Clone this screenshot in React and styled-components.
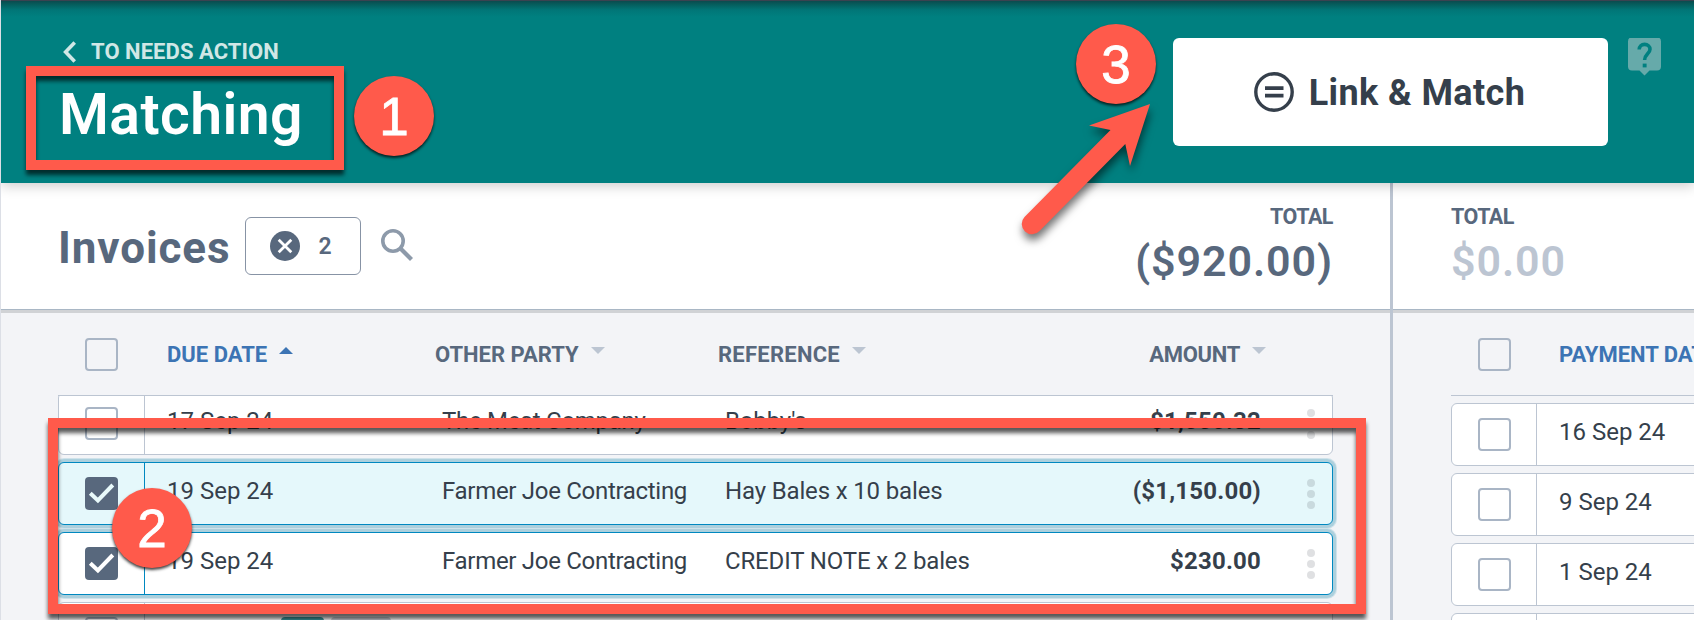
import React from 'react';
import styled, { createGlobalStyle, css } from 'styled-components';

const color = {
  teal: '#008080',
  slate: '#58687d',
  ink: '#353f4b',
  line: '#bcc5d2',
  blue: '#3c74b4',
  accent: '#0088c0',
  mark: '#ff5a4b',
};

const GlobalStyle = createGlobalStyle`
  * { box-sizing: border-box; }
  body { margin: 0; overflow: hidden; font-family: Roboto, "Liberation Sans", sans-serif; color: ${color.ink}; }
`;

const Page = styled.div`
  position: relative;
  width: 1694px;
  height: 620px;
  overflow: hidden;
  display: flex;
  flex-direction: column;
  border-left: 1px solid #dcdfe6;
  background: #f3f4f7;
`;

const Header = styled.header`
  flex: none;
  height: 183px;
  display: flex;
  justify-content: space-between;
  background: linear-gradient(#3b4350 0 1px, #0b4b4e 1px, #05605f 5px, #017677 10px, ${color.teal} 17px);
  padding: 0 33px 0 62px;
  z-index: 1;
  box-shadow: 0 3px 12px rgba(0, 0, 0, 0.2);
`;

const Heading = styled.div`
  padding-top: 41px;
`;

const BackLink = styled.a`
  display: flex;
  align-items: center;
  gap: 15px;
  height: 22px;
  color: #d0e7e6;
  font-size: 22px;
  font-weight: 700;
  line-height: 22px;
  letter-spacing: 0.05px;
`;

const Title = styled.h1`
  margin: 22px 0 0 -4px;
  color: #fff;
  font-size: 57px;
  font-weight: 600;
  line-height: 60px;
  letter-spacing: 0.45px;
`;

const Actions = styled.div`
  display: flex;
  align-items: flex-start;
  gap: 20px;
  padding-top: 38px;
`;

const PrimaryButton = styled.button`
  width: 435px;
  height: 108px;
  display: flex;
  align-items: center;
  justify-content: center;
  gap: 15px;
  padding: 0 2px 0 0;
  border: 0;
  border-radius: 6px;
  background: #fff;
  color: ${color.ink};
  font: 700 36px/40px Roboto, sans-serif;
  letter-spacing: 0.4px;
`;

const ButtonLabel = styled.span`
  padding-top: 2px;
`;

const Panes = styled.main`
  flex: 1;
  min-height: 0;
  display: flex;
`;

const Pane = styled.section`
  flex: none;
  width: ${(p) => p.$width}px;
  display: flex;
  flex-direction: column;
  overflow: hidden;
  ${(p) => p.$divided && css`border-right: 3px solid ${color.line};`}
`;

const Toolbar = styled.div`
  flex: none;
  height: 127px;
  display: flex;
  align-items: flex-start;
  padding: 0 57px 0 ${(p) => (p.$short ? 58 : 57)}px;
  background: #fff;
  border-bottom: 1px solid #a9b7c5;
  box-shadow: 0 3px 0 #d0d2d5;
`;

const ListTitle = styled.h2`
  margin: 40px 15px 0 0;
  color: ${color.slate};
  font-size: 44px;
  font-weight: 700;
  line-height: 50px;
  letter-spacing: 0.9px;
`;

const FilterChip = styled.div`
  width: 116px;
  height: 58px;
  margin: 34px 20px 0 0;
  display: flex;
  align-items: center;
  gap: 18px;
  padding-left: 24px;
  border: 1px solid #8793a5;
  border-radius: 6px;
  color: ${color.slate};
  font-size: 23px;
  font-weight: 600;
`;

const SearchButton = styled.div`
  margin-top: 46px;
  height: 33px;
`;

const Total = styled.div`
  margin-left: ${(p) => (p.$end ? 'auto' : '0')};
  padding-top: 22px;
  text-align: ${(p) => (p.$end ? 'right' : 'left')};
`;

const TotalLabel = styled.div`
  color: ${color.slate};
  font-size: 21.5px;
  font-weight: 700;
  line-height: 24px;
  letter-spacing: -0.5px;
`;

const TotalValue = styled.div`
  margin-top: 8px;
  color: ${(p) => (p.$muted ? color.line : color.slate)};
  font-size: 43px;
  font-weight: 600;
  line-height: 48px;
  letter-spacing: 0.9px;
`;

const columns = css`
  display: grid;
  grid-template-columns: ${(p) => (p.$short ? '86px 1fr' : '87px 297px 283px 275px 261px 1fr')};
`;

const TableHead = styled.div`
  flex: none;
  height: 86px;
  margin: 0 ${(p) => (p.$short ? '0 0 58px' : '57px')};
  padding-top: 3px;
  border-bottom: 1px solid ${color.line};
  ${columns}
  align-items: center;
`;

const HeadCell = styled.div`
  display: flex;
  align-items: center;
  gap: 12px;
  padding-left: ${(p) => (p.$first ? 22 : 0)}px;
  margin-left: ${(p) => (p.$outdent ? -7 : 0)}px;
  justify-content: ${(p) => (p.$end ? 'flex-end' : 'flex-start')};
  margin-right: ${(p) => (p.$end ? -5 : 0)}px;
  color: ${(p) => (p.$active ? color.blue : color.slate)};
  font-size: 22px;
  font-weight: 700;
  letter-spacing: ${(p) => p.$track || 0}px;
  white-space: nowrap;
`;

const SortMark = styled.i`
  margin-bottom: 8px;
  border: 7px solid transparent;
  ${(p) =>
    p.$up
      ? css`border-bottom-color: ${color.blue}; border-top: 0;`
      : css`border-top-color: ${color.line}; border-bottom: 0;`}
`;

const CheckCell = styled.div`
  height: 100%;
  display: flex;
  align-items: center;
  padding-left: ${(p) => (p.$inRow ? 26 : 27)}px;
  margin-right: ${(p) => (p.$inRow ? 1 : 0)}px;
  border-right: ${(p) => (p.$inRow ? '1px solid' : '0')};
  border-color: inherit;
`;

const Box = styled.span`
  flex: none;
  width: 33px;
  height: 33px;
  border-radius: 4px;
  border: 2px solid #a9b5c5;
  ${(p) => p.$checked && css`border: 0; background: ${color.slate};`}
  svg { display: block; }
`;

const List = styled.div`
  flex: 1;
  min-height: 0;
  margin: ${(p) => (p.$short ? '0 0 0 58px' : '0 52px')};
  padding: ${(p) => (p.$short ? '7px 0 0' : '0 5px')};
  display: flex;
  flex-direction: column;
  gap: 7px;
  overflow: hidden;
`;

const ListRow = styled.div`
  flex: none;
  height: 63px;
  ${columns}
  align-items: center;
  border: 1px solid ${color.line};
  border-radius: 6px;
  background: #fff;
  font-size: 24px;
  ${(p) => p.$short && css`width: 400px;`}
  ${(p) => p.$clipped && css`margin-top: -4px;`}
  ${(p) =>
    p.$selected &&
    css`
      border-color: ${color.accent};
      box-shadow: 0 0 0 3px #acd0dd, 0 0 0 4px #cfe2ea;
    `}
  ${(p) => p.$tinted && css`background: #e5f8fb;`}
`;

const Cell = styled.div`
  padding: 0 0 5px ${(p) => (p.$first ? 21 : 0)}px;
  margin-left: ${(p) => (p.$first ? 0 : -1)}px;
  line-height: 30px;
  white-space: nowrap;
  letter-spacing: ${(p) => p.$track || 0}px;
`;

const Amount = styled(Cell)`
  padding-right: 1px;
  font-weight: 700;
  text-align: right;
`;

const Dots = styled.div`
  display: flex;
  flex-direction: column;
  align-items: center;
  gap: 3px;
  padding-left: 28px;
  i { width: 8px; height: 8px; border-radius: 50%; background: rgba(53, 63, 75, 0.16); }
`;

const Tags = styled.div`
  grid-column: 2 / -1;
  align-self: start;
  display: flex;
  gap: 7px;
  padding: 14px 0 0 135px;
`;

const Tag = styled.span`
  width: ${(p) => p.$width}px;
  height: 28px;
  border-radius: 4px;
  background: ${(p) => p.$fill};
`;

const Outline = styled.div`
  position: absolute;
  z-index: 2;
  left: ${(p) => p.$x - 1}px;
  top: ${(p) => p.$y}px;
  width: ${(p) => p.$w}px;
  height: ${(p) => p.$h}px;
  border: 10px solid ${color.mark};
  filter: drop-shadow(0 5px 2px rgba(0, 0, 0, 0.65));
`;

const StepBadge = styled.div`
  position: absolute;
  z-index: 3;
  left: ${(p) => p.$x - 1}px;
  top: ${(p) => p.$y}px;
  width: 80px;
  height: 80px;
  display: flex;
  align-items: center;
  justify-content: center;
  border-radius: 50%;
  background: ${color.mark};
  box-shadow: 0 2px 3px rgba(0, 0, 0, 0.75);
  color: #fff;
  font: 53px/80px "Liberation Sans", Arial, sans-serif;
  padding-top: 1px;
  -webkit-text-stroke: 0.8px #fff;
`;

const Arrow = styled.svg`
  position: absolute;
  z-index: 3;
  left: 1009px;
  top: 94px;
  overflow: visible;
  filter: drop-shadow(1px 6px 4px rgba(0, 0, 0, 0.55));
`;

const Checkbox = ({ checked, tinted }) => (
  <Box $checked={checked}>
    {checked && (
      <svg width="33" height="33" viewBox="0 0 33 33">
        <path d="M5.300 16.200l7.600 7.200L27.800 8" fill="none" stroke={tinted ? '#e9fafb' : '#fff'} strokeWidth="4" />
      </svg>
    )}
  </Box>
);

const MoreDots = () => (
  <Dots>
    <i />
    <i />
    <i />
  </Dots>
);

const invoices = [
  { date: '17 Sep 24', party: 'The Meat Company', ref: 'Bobby\'s', amount: '$1,550.32', clipped: true },
  { date: '19 Sep 24', party: 'Farmer Joe Contracting', ref: 'Hay Bales x 10 bales', amount: '($1,150.00)', selected: true, tinted: true },
  { date: '19 Sep 24', party: 'Farmer Joe Contracting', ref: 'CREDIT NOTE x 2 bales', amount: '$230.00', selected: true },
];

const payments = ['16 Sep 24', '9 Sep 24', '1 Sep 24'];

export default function App() {
  return (
    <Page>
      <GlobalStyle />
      <Header>
        <Heading>
          <BackLink>
            <svg width="13" height="22" viewBox="0 0 13 22">
              <path d="M11.700 1.600L2.600 11l9.100 9.400" fill="none" stroke="currentColor" strokeWidth="3.600" />
            </svg>
            TO NEEDS ACTION
          </BackLink>
          <Title>Matching</Title>
        </Heading>
        <Actions>
          <PrimaryButton>
            <svg width="40" height="40" viewBox="0 0 40 40" fill="none" stroke="currentColor">
              <circle cx="20" cy="20" r="18.200" strokeWidth="3.400" />
              <path d="M11 16.200h18.500M11 23.700h18.500" strokeWidth="3.800" />
            </svg>
            <ButtonLabel>Link &amp; Match</ButtonLabel>
          </PrimaryButton>
          <svg width="33" height="38" viewBox="0 0 33 38">
            <path d="M4 0h25a4 4 0 0 1 4 4v25a4 4 0 0 1-4 4h-7.500l-5 5-5-5H4a4 4 0 0 1-4-4V4a4 4 0 0 1 4-4z" fill="#66aaaa" transform="translate(0 -.6)" />
            <path d="M11.200 11.600c0-3.400 2.300-5.200 5.400-5.200s5.400 2 5.400 4.800c0 4.400-5.400 4.900-5.400 10.800" fill="none" stroke={color.teal} strokeWidth="3.600" />
            <path d="M14.700 25.600h3.900v3.800h-3.900z" fill={color.teal} />
          </svg>
        </Actions>
      </Header>
      <Panes>
        <Pane $width={1392} $divided>
          <Toolbar>
            <ListTitle>Invoices</ListTitle>
            <FilterChip>
              <svg width="30" height="30" viewBox="0 0 30 30">
                <circle cx="15" cy="15" r="15" fill={color.slate} />
                <path d="M8.700 8.700l12.600 12.600M21.300 8.700L8.700 21.300" stroke="#fff" strokeWidth="2.800" />
              </svg>
              2
            </FilterChip>
            <SearchButton>
              <svg width="33" height="33" viewBox="0 0 33 33" fill="none" stroke="#8d9aaa">
                <circle cx="12" cy="12" r="10.200" strokeWidth="3.600" />
                <path d="M19.500 19.500l11 11" strokeWidth="4.200" />
              </svg>
            </SearchButton>
            <Total $end>
              <TotalLabel>TOTAL</TotalLabel>
              <TotalValue>($920.00)</TotalValue>
            </Total>
          </Toolbar>
          <TableHead>
            <CheckCell><Checkbox /></CheckCell>
            <HeadCell $first $active>DUE DATE<SortMark $up /></HeadCell>
            <HeadCell $outdent>OTHER PARTY<SortMark /></HeadCell>
            <HeadCell $outdent $track={0.25}>REFERENCE<SortMark /></HeadCell>
            <HeadCell $end $track={-0.3}>AMOUNT<SortMark /></HeadCell>
          </TableHead>
          <List>
            {invoices.map((row) => (
              <ListRow key={row.ref} $clipped={row.clipped} $selected={row.selected} $tinted={row.tinted}>
                <CheckCell $inRow><Checkbox checked={row.selected} tinted={row.tinted} /></CheckCell>
                <Cell $first>{row.date}</Cell>
                <Cell $track={-0.3}>{row.party}</Cell>
                <Cell $track={-0.15}>{row.ref}</Cell>
                <Amount $track={0.2}>{row.amount}</Amount>
                <MoreDots />
              </ListRow>
            ))}
            <ListRow>
              <CheckCell $inRow><Checkbox /></CheckCell>
              <Tags>
                <Tag $width={43} $fill="#3d969c" />
                <Tag $width={60} $fill="#c7ccd3" />
              </Tags>
            </ListRow>
          </List>
        </Pane>
        <Pane $width={301}>
          <Toolbar $short>
            <Total>
              <TotalLabel>TOTAL</TotalLabel>
              <TotalValue $muted>$0.00</TotalValue>
            </Total>
          </Toolbar>
          <TableHead $short>
            <CheckCell><Checkbox /></CheckCell>
            <HeadCell $first $active>PAYMENT DATE</HeadCell>
          </TableHead>
          <List $short>
            {payments.map((date) => (
              <ListRow key={date} $short>
                <CheckCell $inRow><Checkbox /></CheckCell>
                <Cell $first>{date}</Cell>
              </ListRow>
            ))}
            <ListRow $short>
              <CheckCell $inRow><Checkbox /></CheckCell>
            </ListRow>
          </List>
        </Pane>
      </Panes>
      <Outline $x={26} $y={66} $w={318} $h={104} />
      <Outline $x={48} $y={418} $w={1318} $h={196} />
      <StepBadge $x={354} $y={76}>1</StepBadge>
      <StepBadge $x={112} $y={488}>2</StepBadge>
      <StepBadge $x={1076} $y={24}>3</StepBadge>
      <Arrow width="150" height="150" viewBox="1010 94 150 150">
        <path
          d="M1150 104L1089 125.500L1110.500 130L1024.500 217A10 10 0 0 0 1039.500 231L1125.300 144L1130 166Z"
          fill={color.mark}
        />
      </Arrow>
    </Page>
  );
}
